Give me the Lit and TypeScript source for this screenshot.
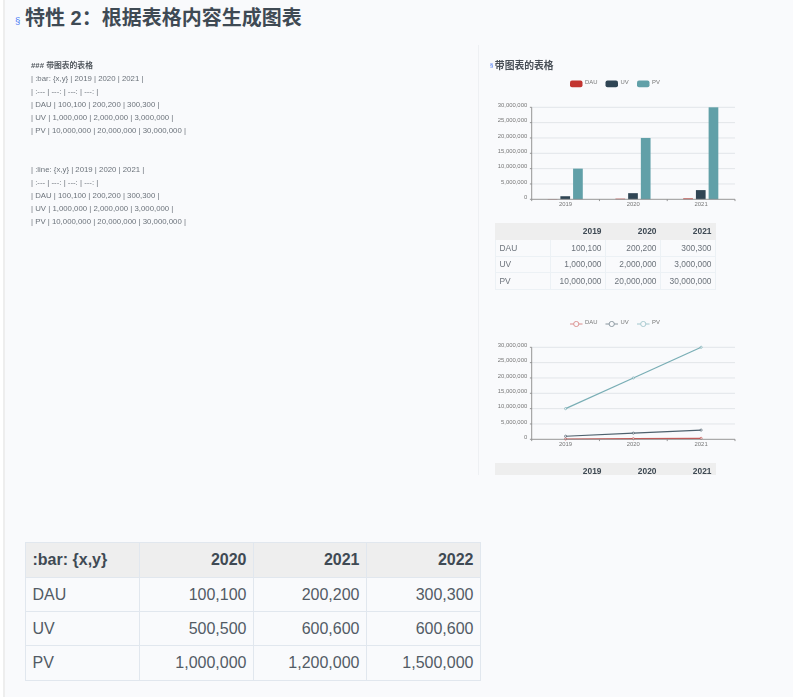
import { LitElement, html, svg, css } from 'lit';
import { customElement, property } from 'lit/decorators.js';

type Series = { name: string; color: string; values: number[] };

const years = ['2019', '2020', '2021'];
const series: Series[] = [
  { name: 'DAU', color: '#c23531', values: [100100, 200200, 300300] },
  { name: 'UV', color: '#2f4554', values: [1000000, 2000000, 3000000] },
  { name: 'PV', color: '#61a0a8', values: [10000000, 20000000, 30000000] },
];

const fmt = (n: number) => n.toLocaleString('en-US');

// chart frame, inside a 250x136 svg
const LEFT = 41.7;
const RIGHT = 245;
const TOP = 31.3;
const BOTTOM = 123.3;
const MAX = 30000000;
const y = (v: number) => BOTTOM - (v / MAX) * (BOTTOM - TOP);
const catW = (RIGHT - LEFT) / 3;
const cx = (i: number) => LEFT + catW * (i + 0.5);

@customElement('mini-chart')
export class MiniChart extends LitElement {
  @property() kind: 'bar' | 'line' = 'bar';

  static styles = css`
    :host {
      display: block;
      width: 250px;
      height: 136px;
    }
    svg {
      display: block;
    }
    text {
      font-family: 'Liberation Sans', sans-serif;
      font-size: 5.9px;
      fill: #777;
    }
    .grid {
      stroke: #e2e5e9;
      stroke-width: 1;
    }
    .axis {
      stroke: #8a8a8a;
      stroke-width: 0.9;
      fill: none;
    }
  `;

  private legend() {
    const slots = [80, 115.5, 147];
    return series.map((s, i) => {
      const x = slots[i];
      const mark =
        this.kind === 'bar'
          ? svg`<rect x=${x} y="4.6" width="12.5" height="6.6" rx="2" fill=${s.color}></rect>`
          : svg`<g opacity="0.62">
              <line x1=${x} x2=${x + 12.5} y1="8" y2="8" stroke=${s.color} stroke-width="0.9"></line>
              <circle cx=${x + 6.25} cy="8" r="2.6" fill="#f9fafc" stroke=${s.color} stroke-width="0.8"></circle>
            </g>`;
      return svg`${mark}<text x=${x + 15} y="7.6">${s.name}</text>`;
    });
  }

  private marks() {
    if (this.kind === 'bar') {
      return series.map((s, si) =>
        s.values.map(
          (v, i) => svg`<rect x=${cx(i) - 17.9 + si * 12.7} y=${y(v)} width="9.7" height=${BOTTOM - y(v)} fill=${s.color}></rect>`
        )
      );
    }
    return series.map((s) => {
      const pts = s.values.map((v, i) => `${cx(i)},${y(v)}`).join(' ');
      return svg`
        <polyline points=${pts} fill="none" stroke=${s.color} stroke-width="1.2" opacity="0.85"></polyline>
        ${s.values.map(
          (v, i) => svg`<circle cx=${cx(i)} cy=${y(v)} r="1.1" fill="#f9fafc" stroke=${s.color} stroke-width="0.7" opacity="0.8"></circle>`
        )}`;
    });
  }

  render() {
    const ticks = [0, 5, 10, 15, 20, 25, 30].map((m) => m * 1000000);
    return html`
      <svg width="250" height="136" viewBox="0 0 250 136">
        ${this.legend()}
        ${ticks.map(
          (t) => svg`
            ${t > 0 ? svg`<line class="grid" x1=${LEFT} x2=${RIGHT} y1=${y(t)} y2=${y(t)}></line>` : ''}
            <line class="axis" x1=${LEFT - 1.8} x2=${LEFT} y1=${y(t)} y2=${y(t)}></line>
            <text x=${LEFT - 4.5} y=${y(t) - 0.2} text-anchor="end">${fmt(t)}</text>`
        )}
        ${this.marks()}
        <line class="axis" x1=${LEFT} x2=${LEFT} y1=${TOP} y2=${BOTTOM}></line>
        <line class="axis" x1=${LEFT} x2=${RIGHT} y1=${BOTTOM} y2=${BOTTOM}></line>
        ${[0, 1, 2, 3].map(
          (i) => svg`<line class="axis" x1=${LEFT + catW * i} x2=${LEFT + catW * i} y1=${BOTTOM} y2=${BOTTOM + 1.8}></line>`
        )}
        ${years.map((yr, i) => svg`<text x=${cx(i)} y=${BOTTOM + 6.8} text-anchor="middle">${yr}</text>`)}
      </svg>
    `;
  }
}

const barSource = [
  '| :bar: {x,y} | 2019 | 2020 | 2021 |',
  '| :--- | ---: | ---: | ---: |',
  '| DAU | 100,100 | 200,200 | 300,300 |',
  '| UV | 1,000,000 | 2,000,000 | 3,000,000 |',
  '| PV | 10,000,000 | 20,000,000 | 30,000,000 |',
];
const lineSource = [
  '| :line: {x,y} | 2019 | 2020 | 2021 |',
  '| :--- | ---: | ---: | ---: |',
  '| DAU | 100,100 | 200,200 | 300,300 |',
  '| UV | 1,000,000 | 2,000,000 | 3,000,000 |',
  '| PV | 10,000,000 | 20,000,000 | 30,000,000 |',
];

const bigRows = [
  ['DAU', '100,100', '200,200', '300,300'],
  ['UV', '500,500', '600,600', '600,600'],
  ['PV', '1,000,000', '1,200,000', '1,500,000'],
];

@customElement('app-root')
export class AppRoot extends LitElement {
  static styles = css`
    :host {
      display: block;
      width: 793px;
      height: 697px;
      overflow: hidden;
      background: #fff;
      font-family: 'Liberation Sans', 'Noto Sans CJK SC', sans-serif;
      color: #3f4a54;
    }
    .page {
      height: 697px;
      margin-left: 3px;
      border-left: 2px solid #eeeeee;
      background: #f9fafc;
      padding-left: 10px;
      box-sizing: border-box;
    }
    h2 {
      margin: 0;
      height: 37px;
      display: flex;
      align-items: center;
      gap: 4.7px;
      font-size: 20px;
      font-weight: 700;
      line-height: 37px;
    }
    .anchor {
      color: #3f78f5;
      font-size: 9.5px;
      font-weight: 400;
      padding-top: 4px;
    }
    .shot {
      display: flex;
      height: 430px;
      margin-top: 8px;
      overflow: hidden;
      filter: blur(0.3px);
    }
    .source {
      width: 463px;
      box-sizing: border-box;
      padding: 13.5px 0 0 16px;
      font-size: 7.8px;
      line-height: 13px;
      color: #6c737b;
    }
    .source p {
      margin: 0;
    }
    .source .block + .block {
      margin-top: 26px;
    }
    .source strong {
      color: #50565c;
    }
    .preview {
      width: 270px;
      box-sizing: border-box;
      border-left: 1px solid #eef0f3;
      padding: 13.5px 0 0 11px;
    }
    .preview h4 {
      margin: 0 0 4px;
      font-size: 9.8px;
      line-height: 13px;
      font-weight: 700;
      color: #484f57;
      display: flex;
      align-items: center;
      gap: 1.5px;
    }
    .preview h4 span {
      color: #6f95f5;
      font-size: 6px;
      font-weight: 700;
    }
    .mini {
      border-collapse: collapse;
      table-layout: fixed;
      width: 221px;
      margin: 11px 0 26px 5px;
      font-size: 8.4px;
      color: #6c737b;
    }
    .mini th,
    .mini td {
      border: 1px solid #ecf1f5;
      height: 15.6px;
      padding: 0 3.5px;
      text-align: right;
      line-height: 1;
    }
    .mini th {
      background: #eeeeee;
      color: #3f4a54;
      border-color: #eeeeee;
    }
    .mini td:first-child,
    .big td:first-child,
    .big th:first-child {
      text-align: left;
    }
    .big {
      border-collapse: collapse;
      table-layout: fixed;
      width: 456px;
      margin: 67px 0 0 10px;
      font-size: 16px;
    }
    .big th,
    .big td {
      box-sizing: border-box;
      border: 1px solid #e1e7ee;
      height: 34px;
      padding: 0 6.5px;
      text-align: right;
      line-height: 1;
    }
    .big th {
      background: #eeeeee;
      height: 35px;
    }
    .big th:nth-child(1),
    .big th:nth-child(2) {
      width: 114px;
    }
    .big th:nth-child(3) {
      width: 113px;
    }
    .big td {
      color: #525b65;
    }
    .big tr:last-child td {
      height: 35px;
    }
  `;

  render() {
    return html`
      <div class="page">
        <h2><span class="anchor">§</span>特性 2：根据表格内容生成图表</h2>
        <div class="shot">
          <div class="source">
            <div class="block">
              <p><strong>### 带图表的表格</strong></p>
              ${barSource.map((l) => html`<p>${l}</p>`)}
            </div>
            <div class="block">${lineSource.map((l) => html`<p>${l}</p>`)}</div>
          </div>
          <div class="preview">
            <h4><span>§</span>带图表的表格</h4>
            <mini-chart kind="bar"></mini-chart>
            ${this.miniTable(true)}
            <mini-chart kind="line"></mini-chart>
            ${this.miniTable(false)}
          </div>
        </div>
        <table class="big">
          <thead>
            <tr>
              <th>:bar: {x,y}</th>
              <th>2020</th>
              <th>2021</th>
              <th>2022</th>
            </tr>
          </thead>
          <tbody>
            ${bigRows.map((r) => html`<tr>${r.map((c) => html`<td>${c}</td>`)}</tr>`)}
          </tbody>
        </table>
      </div>
    `;
  }

  // the second table runs out of the screenshot below its header row
  private miniTable(withBody: boolean) {
    return html`
      <table class="mini">
        <thead>
          <tr>
            <th></th>
            ${years.map((yr) => html`<th>${yr}</th>`)}
          </tr>
        </thead>
        ${withBody
          ? html`<tbody>
              ${series.map(
                (s) => html`<tr>
                  <td>${s.name}</td>
                  ${s.values.map((v) => html`<td>${fmt(v)}</td>`)}
                </tr>`
              )}
            </tbody>`
          : ''}
      </table>
    `;
  }
}
